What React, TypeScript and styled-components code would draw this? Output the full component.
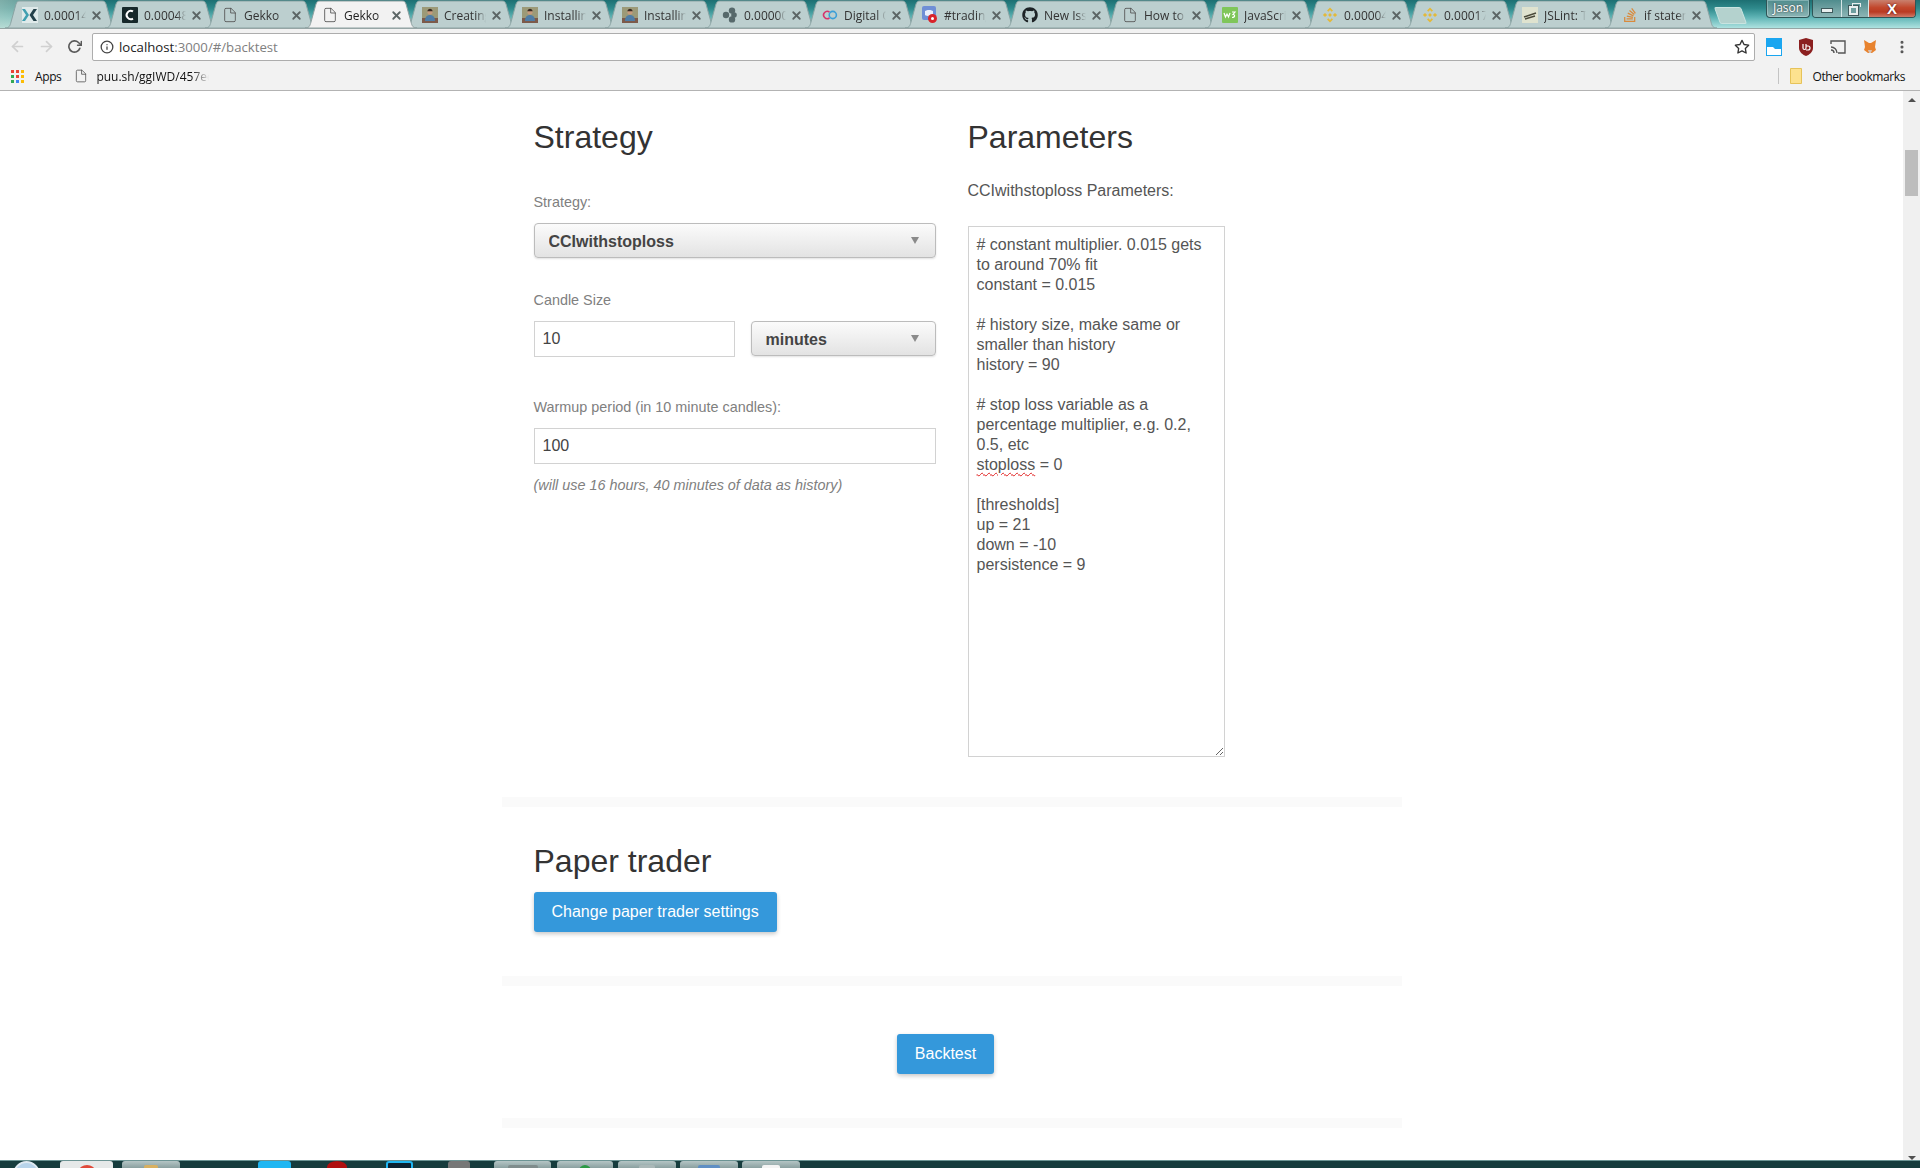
import React from 'react'
import styled, { createGlobalStyle, css } from 'styled-components'
import { FaGithub, FaStackOverflow } from 'react-icons/fa'
import { FiFile, FiArrowLeft, FiArrowRight, FiRotateCw, FiInfo, FiStar, FiX, FiMoreVertical } from 'react-icons/fi'

const GlobalStyle = createGlobalStyle`
  html, body {
    margin: 0;
    padding: 0;
    height: 100%;
    overflow: hidden;
    background: #fff;
  }
  * {
    box-sizing: border-box;
  }
`

const chromeFont = `"Open Sans", "Noto Sans", "Liberation Sans", sans-serif`
const pageFont = `"Liberation Sans", Arial, sans-serif`

const Frame = styled.div`
  width: 1920px;
  height: 1168px;
  display: flex;
  flex-direction: column;
  overflow: hidden;
  font-family: ${pageFont};
`

/* ---------- tab strip ---------- */

const TitleBar = styled.div`
  height: 29px;
  flex: none;
  display: flex;
  align-items: flex-start;
  padding-left: 5px;
  border-bottom: 1px solid #96a5a5;
  background:
    linear-gradient(90deg, rgba(190, 215, 205, 0.6) 0, rgba(190, 215, 205, 0) 100px),
    linear-gradient(180deg, #1d6f72 0, #2f8a8c 30%, #5fb4b5 62%, #aee2e0 100%);
`

const TabWrap = styled.div<{ $active?: boolean }>`
  position: relative;
  flex: none;
  width: 112px;
  height: 28px;
  margin-right: -12px;
  display: flex;
  align-items: center;
  padding: 2px 0 0 17px;
  z-index: ${p => (p.$active ? 2 : 1)};
`

const TabShape = styled.svg`
  position: absolute;
  inset: 0;
`

const TabIcon = styled.span`
  position: relative;
  flex: none;
  width: 16px;
  height: 16px;
  display: flex;
  align-items: center;
  justify-content: center;
  margin-right: 6px;
`

const TabTitle = styled.span<{ $active?: boolean }>`
  position: relative;
  width: 42px;
  flex: none;
  overflow: hidden;
  white-space: nowrap;
  font: 12px ${chromeFont};
  color: ${p => (p.$active ? '#222' : '#333')};
  -webkit-mask-image: linear-gradient(90deg, #000 78%, transparent 100%);
  mask-image: linear-gradient(90deg, #000 78%, transparent 100%);
`

const TabClose = styled(FiX)`
  position: relative;
  flex: none;
  margin-left: 4px;
  color: #5c6666;
  stroke-width: 3.4;
`

const NewTab = styled.div`
  flex: none;
  width: 27px;
  height: 17px;
  margin: 7px 0 0 12px;
  background: #b4d2ce;
  border: 1px solid #c9e4e0;
  transform: skewX(20deg);
  border-radius: 2px;
`

const WindowControls = styled.div`
  margin-left: 22px;
  display: flex;
  gap: 2px;
`

const UserBadge = styled.div`
  width: 44px;
  height: 18px;
  border: 1px solid #2f5556;
  border-top: none;
  border-radius: 0 0 4px 4px;
  box-shadow: inset 0 0 0 1px rgba(220, 240, 240, 0.35);
  background: linear-gradient(180deg, #4f8c8d, #8db5b5);
  color: #fff;
  font: 12px/16px ${chromeFont};
  text-align: center;
  text-shadow: 0 0 2px #222;
`

const ControlGroup = styled.div`
  width: 104px;
  height: 18px;
  display: flex;
  border: 1px solid #2f5556;
  border-top: none;
  border-radius: 0 0 4px 4px;
  overflow: hidden;
`

const ControlButton = styled.div<{ $close?: boolean; $width: number }>`
  width: ${p => p.$width}px;
  flex: ${p => (p.$close ? '1' : 'none')};
  display: flex;
  align-items: center;
  justify-content: center;
  color: #fff;
  font: bold 15px/1 ${pageFont};
  text-shadow: 0 0 2px #411;
  border-right: ${p => (p.$close ? 'none' : '1px solid #d5e6e6')};
  background: ${p =>
    p.$close
      ? 'linear-gradient(180deg, #c9806e 0, #c2472c 45%, #b93a22 70%, #cf7a68 100%)'
      : 'linear-gradient(180deg, #4f8c8d, #8db5b5)'};
`

const MinimizeGlyph = styled.span`
  width: 12px;
  height: 5px;
  margin-top: 4px;
  background: #e8eeee;
  border: 1px solid #3f5a5c;
`

const RestoreGlyph = styled.span`
  position: relative;
  width: 9px;
  height: 9px;
  margin: 3px 3px 0 0;
  background: #6d9fa0;
  border: 2px solid #e8eeee;
  outline: 1px solid #3f5a5c;
  &::before {
    content: '';
    position: absolute;
    top: -5px;
    left: 1px;
    width: 7px;
    height: 3px;
    border: 1px solid #e8eeee;
    border-bottom: none;
  }
`

/* ---------- toolbar + bookmarks ---------- */

const Toolbar = styled.div`
  height: 33px;
  flex: none;
  display: flex;
  align-items: center;
  background: #f2f2f2;
  padding: 3px 0 1px 9px;
`

const NavButton = styled.span<{ $muted?: boolean; $gap?: number }>`
  display: flex;
  margin-right: ${p => p.$gap ?? 0}px;
  color: ${p => (p.$muted ? '#d0d0d0' : '#5a5a5a')};
`

const Omnibox = styled.div`
  width: 1663px;
  height: 28px;
  flex: none;
  display: flex;
  align-items: center;
  padding: 0 4px 0 7px;
  background: #fff;
  border: 1px solid #adadad;
  border-radius: 2px;
  font: 13.2px ${chromeFont};
`

const UrlHost = styled.span`
  margin-left: 5px;
  color: #222;
`

const UrlRest = styled.span`
  flex: 1;
  color: #808080;
`

const ExtensionTray = styled.div`
  display: flex;
  align-items: center;
  margin-left: 11px;
  gap: 16px;
`

const BookmarkBar = styled.div`
  height: 29px;
  flex: none;
  display: flex;
  align-items: center;
  padding: 0 15px 0 11px;
  background: #f2f2f2;
  border-bottom: 1px solid #b3b3b3;
  font: 12px ${chromeFont};
  color: #111;
`

const BookmarkLink = styled.span<{ $fade?: boolean; $tight?: boolean }>`
  white-space: nowrap;
  ${p => p.$tight && 'letter-spacing: -0.4px;'}
  ${p =>
    p.$fade &&
    css`
      width: 113px;
      overflow: hidden;
      -webkit-mask-image: linear-gradient(90deg, #000 85%, transparent 100%);
      mask-image: linear-gradient(90deg, #000 85%, transparent 100%);
    `}
`

const BookmarkIcon = styled.span<{ $left?: number; $right?: number }>`
  display: flex;
  flex: none;
  margin-left: ${p => p.$left ?? 0}px;
  margin-right: ${p => p.$right ?? 0}px;
`

const BarSpacer = styled.span`
  flex: 1;
`

const BarDivider = styled.span`
  width: 1px;
  height: 16px;
  background: #c4c4c4;
  margin-right: 11px;
`

/* ---------- page ---------- */

const Viewport = styled.div`
  flex: 1;
  min-height: 0;
  display: flex;
`

const PageScroll = styled.main`
  flex: 1;
  min-width: 0;
  overflow: hidden;
  background: #fff;
  color: #333;
`

const Container = styled.div`
  width: 900px;
  margin: 0 auto;
`

const Section = styled.section`
  padding: 26px 32px 40px;
`

const PaperSection = styled.section`
  padding: 34px 32px 44px;
`

const BacktestRow = styled.section`
  padding: 48px 12px 44px 0;
  display: flex;
  justify-content: center;
`

const Columns = styled.div`
  display: grid;
  grid-template-columns: 402px 257px;
  column-gap: 32px;
`

const Title = styled.h3`
  margin: 0;
  font-size: 32px;
  line-height: 40px;
  font-weight: 400;
  color: #333;
`

const FieldLabel = styled.label<{ $top: number }>`
  display: block;
  margin: ${p => p.$top}px 0 11px;
  font-size: 14.4px;
  line-height: 20px;
  color: #808080;
`

const Inline = styled.div`
  display: grid;
  grid-template-columns: 201px 185px;
  column-gap: 16px;
`

const TextInput = styled.input`
  display: block;
  width: 100%;
  height: 36px;
  padding: 0 8px;
  border: 1px solid #d2d2d2;
  border-radius: 0;
  outline: none;
  background: #fff;
  color: #444;
  font: 16px ${pageFont};
`

const SelectBox = styled.div`
  position: relative;
  &::after {
    content: '';
    position: absolute;
    top: 14px;
    right: 17px;
    border-style: solid;
    border-width: 7px 4.5px 0;
    border-color: #8a8a8a transparent transparent;
    pointer-events: none;
  }
`

const Select = styled.select`
  display: block;
  width: 100%;
  height: 35px;
  padding: 1px 14px 0;
  appearance: none;
  border: 1px solid #bcbcbc;
  border-radius: 4px;
  outline: none;
  background: linear-gradient(180deg, #fbfbfb, #e3e3e3);
  box-shadow: 0 1px 2px rgba(0, 0, 0, 0.12);
  color: #444;
  font: bold 16px ${pageFont};
`

const Hint = styled.p`
  margin: 11px 0 0;
  font-size: 14.4px;
  line-height: 20px;
  font-style: italic;
  color: #808080;
`

const ParamLabel = styled.div`
  margin: 24px 0 25px;
  font-size: 16px;
  line-height: 20px;
  color: #555;
`

const ParamBox = styled.div`
  width: 257px;
  height: 531px;
  padding: 8px;
  border: 1px solid #d2d2d2;
  overflow: auto;
  resize: both;
  white-space: pre-wrap;
  font-size: 16px;
  line-height: 20px;
  color: #555;
`

const Misspelled = styled.span`
  text-decoration: underline wavy #e02020 1px;
  text-underline-offset: 2px;
`

const Divider = styled.hr`
  margin: 0;
  height: 10px;
  border: none;
  background: #fafafa;
`

const PrimaryButton = styled.button<{ $top?: number }>`
  display: block;
  height: 40px;
  margin-top: ${p => p.$top ?? 0}px;
  padding: 0 18px;
  border: none;
  border-radius: 3px;
  background: #3498db;
  box-shadow: 0 2px 4px rgba(0, 0, 0, 0.22);
  color: #fff;
  font: 16px ${pageFont};
`

const Scrollbar = styled.div`
  width: 17px;
  flex: none;
  display: flex;
  flex-direction: column;
  align-items: center;
  background: #f0f0f0;
  padding-top: 7px;
`

const ScrollArrow = styled.span<{ $down?: boolean }>`
  width: 0;
  height: 0;
  border-style: solid;
  border-width: ${p => (p.$down ? '4px 4px 0' : '0 4px 4px')};
  border-color: ${p => (p.$down ? '#505050 transparent transparent' : 'transparent transparent #505050')};
`

const ScrollThumb = styled.span`
  width: 13px;
  height: 46px;
  margin-top: 48px;
  background: #bdbdbd;
`

const ScrollGap = styled.span`
  flex: 1;
`

/* ---------- taskbar ---------- */

const Taskbar = styled.footer`
  height: 8px;
  flex: none;
  display: flex;
  overflow: hidden;
  padding-left: 13px;
  background: #163c3d;
  border-top: 1px solid #6c9494;
`

const StartOrb = styled.span`
  width: 27px;
  height: 27px;
  flex: none;
  border-radius: 50%;
  background: #b8d4ea;
  border: 2px solid #dfeaf2;
`

const TaskButton = styled.span<{ $left: number; $width: number; $light?: boolean }>`
  flex: none;
  width: ${p => p.$width}px;
  margin-left: ${p => p.$left}px;
  display: flex;
  justify-content: center;
  padding-top: 4px;
  border-radius: 3px 3px 0 0;
  background: ${p => (p.$light ? '#e6e9e9' : 'linear-gradient(180deg, #b5c5c5, #8aa0a0)')};
`

const TaskGlyph = styled.span<{ $color: string; $width: number; $round?: boolean }>`
  width: ${p => p.$width}px;
  height: 12px;
  background: ${p => p.$color};
  border-radius: ${p => (p.$round ? '50%' : '2px')};
`

const PinnedIcon = styled.span<{ $left: number; $width: number; $color: string; $outline?: boolean; $round?: boolean }>`
  flex: none;
  width: ${p => p.$width}px;
  height: 12px;
  margin-left: ${p => p.$left}px;
  background: ${p => (p.$outline ? '#0b2030' : p.$color)};
  border: ${p => (p.$outline ? `2px solid ${p.$color}` : 'none')};
  border-radius: ${p => (p.$round ? '50% 50% 0 0' : '3px 3px 0 0')};
`

/* ---------- favicons ---------- */

const DocIcon = () => <FiFile size={16} color="#555" strokeWidth={1.3} />

const PhotoIcon = () => (
  <svg width="16" height="16" viewBox="0 0 16 16">
    <rect width="16" height="16" fill="#9c9a78" />
    <rect y="11" width="16" height="5" fill="#7c5a4a" />
    <circle cx="8" cy="5" r="2.6" fill="#c79a7c" />
    <path d="M8 1.800a3 3 0 0 0-2.800 2.400h5.600A3 3 0 0 0 8 1.800z" fill="#3a2c24" />
    <path d="M3 14c0-4 2-6 5-6s5 2 5 6z" fill="#4f7da6" />
  </svg>
)

const BinanceIcon = () => (
  <svg width="16" height="16" viewBox="0 0 16 16" fill="#e3b93a">
    <path d="M8 .5l3 3-1.300 1.300L8 3.100 6.300 4.800 5 3.500zM8 15.500l3-3-1.300-1.300L8 12.900l-1.700-1.700L5 12.500zM3 5.900L5.100 8 3 10.100.9 8zM13 5.900L15.100 8 13 10.100 10.900 8zM8 6.100L9.900 8 8 9.900 6.100 8z" />
  </svg>
)

const favicons: Record<string, React.ReactNode> = {
  xx: (
    <svg width="16" height="16" viewBox="0 0 16 16">
      <rect width="16" height="16" fill="#dfeaea" />
      <path d="M0 2h3l4 6-4 6H0l4-6z" fill="#3f9fb0" />
      <path d="M15 2h-3.500L7.500 8l4 6H15l-4-6z" fill="#23414a" />
    </svg>
  ),
  c: (
    <svg width="16" height="16" viewBox="0 0 16 16">
      <rect width="16" height="16" rx="1" fill="#16282a" />
      <path d="M11 4.400A4.200 4.200 0 1 0 11 11.600" fill="none" stroke="#fff" strokeWidth="2" />
    </svg>
  ),
  doc: <DocIcon />,
  photo: <PhotoIcon />,
  cluster: (
    <svg width="16" height="16" viewBox="0 0 16 16" fill="#56696b">
      <circle cx="10" cy="3.600" r="3.200" />
      <circle cx="10" cy="12.400" r="3.200" />
      <circle cx="4" cy="8" r="3.200" />
      <circle cx="12" cy="8" r="2.800" />
    </svg>
  ),
  digital: (
    <svg width="16" height="16" viewBox="0 0 16 16" fill="none" strokeWidth="1.600">
      <path d="M7.500 5.200A3.600 3.600 0 1 0 7.500 10.800" stroke="#d6336c" />
      <circle cx="10.800" cy="8" r="3.600" stroke="#3b9fd8" />
    </svg>
  ),
  discord: (
    <svg width="16" height="18" viewBox="0 0 16 18">
      <rect width="14" height="14" rx="2" fill="#6f8fd6" />
      <path d="M3 5c2-1.500 6-1.500 8 0v4c-2 1.500-6 1.500-8 0z" fill="#e8eefc" />
      <circle cx="10.500" cy="12.500" r="4.500" fill="#d8232a" />
      <circle cx="10.500" cy="12.500" r="1.500" fill="#fff" />
    </svg>
  ),
  github: <FaGithub size={16} color="#1d2326" />,
  w3: (
    <svg width="16" height="16" viewBox="0 0 16 16">
      <rect width="16" height="16" rx="1" fill="#7fc65a" />
      <path d="M2 6l1.500 4 1.500-3 1.500 3L8 6M10 5h3l-2 2.500c2-.3 2.500 3-1 3" fill="none" stroke="#fff" strokeWidth="1.200" />
    </svg>
  ),
  binance: <BinanceIcon />,
  jslint: (
    <svg width="16" height="16" viewBox="0 0 16 16">
      <rect width="16" height="16" fill="#dfe3cf" />
      <path d="M2 10l12-4M3 12l10-3" stroke="#4a4a3a" strokeWidth="1.400" />
    </svg>
  ),
  stack: <FaStackOverflow size={16} color="#d98a3c" />,
}

const tabs = [
  { icon: 'xx', title: '0.00014583' },
  { icon: 'c', title: '0.00048122' },
  { icon: 'doc', title: 'Gekko' },
  { icon: 'doc', title: 'Gekko', active: true },
  { icon: 'photo', title: 'Creating a' },
  { icon: 'photo', title: 'Installing' },
  { icon: 'photo', title: 'Installing' },
  { icon: 'cluster', title: '0.00000312' },
  { icon: 'digital', title: 'Digital Ocean' },
  { icon: 'discord', title: '#trading' },
  { icon: 'github', title: 'New Issue' },
  { icon: 'doc', title: 'How to' },
  { icon: 'w3', title: 'JavaScript' },
  { icon: 'binance', title: '0.00004127' },
  { icon: 'binance', title: '0.00017231' },
  { icon: 'jslint', title: 'JSLint: The' },
  { icon: 'stack', title: 'if statement' },
]

const Tab = ({ icon, title, active }: { icon: string; title: string; active?: boolean }) => (
  <TabWrap $active={active}>
    <TabShape width="112" height="28" viewBox="0 0 112 28">
      <path
        d="M0 28 C4 28 5 26 6 22 L11 4 C12 1.500 13 1 15 1 L97 1 C99 1 100 1.500 101 4 L106 22 C107 26 108 28 112 28 Z"
        fill={active ? '#f2f2f2' : '#bccfcf'}
        stroke={active ? '#8fa0a0' : '#8aa3a3'}
      />
    </TabShape>
    <TabIcon>{favicons[icon]}</TabIcon>
    <TabTitle $active={active}>{title}</TabTitle>
    <TabClose size={13} />
  </TabWrap>
)

const AppsIcon = () => (
  <svg width="13" height="13" viewBox="0 0 13 13">
    {['#ea4335', '#ea4335', '#fbbc05', '#34a853', '#ea4335', '#fbbc05', '#34a853', '#4285f4', '#fbbc05'].map((c, i) => (
      <rect key={i} x={(i % 3) * 5} y={Math.floor(i / 3) * 5} width="3" height="3" fill={c} />
    ))}
  </svg>
)

const App = () => (
  <>
    <GlobalStyle />
    <Frame>
      <TitleBar>
        {tabs.map((t, i) => (
          <Tab key={i} {...t} />
        ))}
        <NewTab />
        <WindowControls>
          <UserBadge>Jason</UserBadge>
          <ControlGroup>
            <ControlButton $width={29}>
              <MinimizeGlyph />
            </ControlButton>
            <ControlButton $width={27}>
              <RestoreGlyph />
            </ControlButton>
            <ControlButton $close $width={48}>
              X
            </ControlButton>
          </ControlGroup>
        </WindowControls>
      </TitleBar>

      <Toolbar>
        <NavButton $muted $gap={12}>
          <FiArrowLeft size={17} strokeWidth={2.4} />
        </NavButton>
        <NavButton $muted $gap={12}>
          <FiArrowRight size={17} strokeWidth={2.4} />
        </NavButton>
        <NavButton $gap={10}>
          <FiRotateCw size={15} strokeWidth={2.6} />
        </NavButton>
        <Omnibox>
          <FiInfo size={14} color="#444" strokeWidth={2.2} />
          <UrlHost>localhost</UrlHost>
          <UrlRest>:3000/#/backtest</UrlRest>
          <FiStar size={16} color="#333" strokeWidth={2} />
        </Omnibox>
        <ExtensionTray>
          <svg width="16" height="18" viewBox="0 0 16 18">
            <rect width="16" height="18" fill="#1aa6f0" />
            <path d="M1 9h6l2 2h6v6H1z" fill="#fff" />
          </svg>
          <svg width="16" height="18" viewBox="0 0 16 18">
            <path d="M8 0l7 2v8c0 4-4 7-7 8-3-1-7-4-7-8V2z" fill="#8b1f1f" />
            <path d="M5 6v4a1.500 1.500 0 0 0 3 0V6M8 8h2a2 2 0 0 1 0 4H8" fill="none" stroke="#fff" strokeWidth="1.200" />
          </svg>
          <svg width="16" height="16" viewBox="0 0 16 16" fill="none" stroke="#555" strokeWidth="1.400">
            <path d="M1 5V2h14v12H8M1 8a6 6 0 0 1 6 6M1 11a3 3 0 0 1 3 3" />
          </svg>
          <svg width="16" height="16" viewBox="0 0 16 16">
            <path d="M2 1l5 3h2l5-3-1 7 1 3-4 3H6l-4-3 1-3z" fill="#e8832e" />
            <path d="M6 11h4l-1 3H7z" fill="#d7c1b3" />
          </svg>
          <FiMoreVertical size={16} color="#555" strokeWidth={2.6} />
        </ExtensionTray>
      </Toolbar>

      <BookmarkBar>
        <BookmarkIcon $right={11}>
          <AppsIcon />
        </BookmarkIcon>
        <BookmarkLink $tight>Apps</BookmarkLink>
        <BookmarkIcon $left={13} $right={8}>
          <FiFile size={14} color="#555" strokeWidth={1.4} />
        </BookmarkIcon>
        <BookmarkLink $fade>puu.sh/ggIWD/457ee8b1</BookmarkLink>
        <BarSpacer />
        <BarDivider />
        <BookmarkIcon $right={10}>
          <svg width="12" height="16" viewBox="0 0 12 16">
            <path d="M.5.5h11v15H.5z" fill="#fde28f" stroke="#e6c35a" />
          </svg>
        </BookmarkIcon>
        <BookmarkLink $tight>Other bookmarks</BookmarkLink>
      </BookmarkBar>

      <Viewport>
        <PageScroll>
          <Container>
            <Section>
              <Columns>
                <div>
                  <Title>Strategy</Title>
                  <FieldLabel $top={35}>Strategy:</FieldLabel>
                  <SelectBox>
                    <Select defaultValue="CCIwithstoploss">
                      <option>CCIwithstoploss</option>
                    </Select>
                  </SelectBox>
                  <FieldLabel $top={32}>Candle Size</FieldLabel>
                  <Inline>
                    <TextInput defaultValue="10" />
                    <SelectBox>
                      <Select defaultValue="minutes">
                        <option>minutes</option>
                      </Select>
                    </SelectBox>
                  </Inline>
                  <FieldLabel $top={40}>Warmup period (in 10 minute candles):</FieldLabel>
                  <TextInput defaultValue="100" />
                  <Hint>(will use 16 hours, 40 minutes of data as history)</Hint>
                </div>
                <div>
                  <Title>Parameters</Title>
                  <ParamLabel>CCIwithstoploss Parameters:</ParamLabel>
                  <ParamBox>
                    {`# constant multiplier. 0.015 gets to around 70% fit
constant = 0.015

# history size, make same or smaller than history
history = 90

# stop loss variable as a percentage multiplier, e.g. 0.2, 0.5, etc
`}
                    <Misspelled>stoploss</Misspelled>
                    {` = 0

[thresholds]
up = 21
down = -10
persistence = 9`}
                  </ParamBox>
                </div>
              </Columns>
            </Section>
            <Divider />
            <PaperSection>
              <Title>Paper trader</Title>
              <PrimaryButton $top={11}>Change paper trader settings</PrimaryButton>
            </PaperSection>
            <Divider />
            <BacktestRow>
              <PrimaryButton>Backtest</PrimaryButton>
            </BacktestRow>
            <Divider />
          </Container>
        </PageScroll>
        <Scrollbar>
          <ScrollArrow />
          <ScrollThumb />
          <ScrollGap />
          <ScrollArrow $down />
        </Scrollbar>
      </Viewport>

      <Taskbar>
        <StartOrb />
        <TaskButton $left={20} $width={53} $light>
          <TaskGlyph $color="#e04a3a" $width={16} $round />
        </TaskButton>
        <TaskButton $left={9} $width={58}>
          <TaskGlyph $color="#d8b060" $width={14} />
        </TaskButton>
        <PinnedIcon $left={78} $width={33} $color="#1fb6f2" />
        <PinnedIcon $left={36} $width={20} $color="#b01010" $round />
        <PinnedIcon $left={39} $width={27} $color="#1fb6f2" $outline />
        <PinnedIcon $left={35} $width={22} $color="#777" />
        <TaskButton $left={24} $width={57}>
          <TaskGlyph $color="#7f8c8c" $width={30} />
        </TaskButton>
        <TaskButton $left={6} $width={56}>
          <TaskGlyph $color="#2c9a46" $width={12} $round />
        </TaskButton>
        <TaskButton $left={5} $width={58}>
          <TaskGlyph $color="#aab8b8" $width={16} />
        </TaskButton>
        <TaskButton $left={4} $width={58}>
          <TaskGlyph $color="#5f8fc4" $width={22} />
        </TaskButton>
        <TaskButton $left={4} $width={58}>
          <TaskGlyph $color="#f4f4f4" $width={18} />
        </TaskButton>
      </Taskbar>
    </Frame>
  </>
)

export default App
